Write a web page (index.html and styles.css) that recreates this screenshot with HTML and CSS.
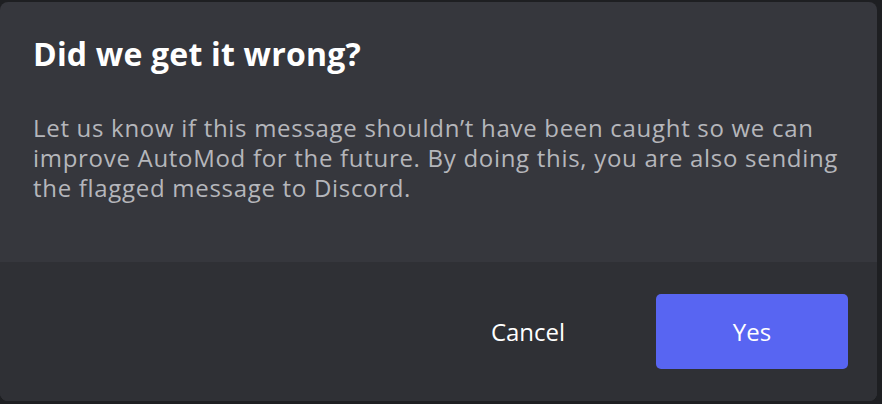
FILE: index.html
```html
<!DOCTYPE html>
<html>
<head>
<meta charset="utf-8">
<link rel="stylesheet" href="styles.css">
</head>
<body>
<div class="modal">
  <div class="content">
    <h1 class="title">Did we get it wrong?</h1>
    <p class="text">Let us know if this message shouldn’t have been caught so we can improve AutoMod for the future. By doing this, you are also sending the flagged message to Discord.</p>
  </div>
  <div class="footer">
    <button class="btn btn-link">Cancel</button>
    <button class="btn btn-primary">Yes</button>
  </div>
</div>
</body>
</html>
```
FILE: styles.css
```css
html, body {
  margin: 0;
  padding: 0;
  background: #1e1f22;
  width: 882px;
  height: 404px;
  overflow: hidden;
}
.modal {
  margin: 2px 5px 3px 0;
  width: 877px;
  height: 399px;
  background: #36373d;
  border-radius: 8px;
  display: flex;
  flex-direction: column;
  overflow: hidden;
}
.content {
  flex: 1;
  padding: 32px 33px 0 33px;
}
.title {
  margin: 0;
  font-family: "Open Sans", sans-serif;
  font-weight: 700;
  font-size: 32px;
  line-height: 40px;
  letter-spacing: 0.2px;
  color: #ffffff;
}
.text {
  margin: 39px 0 0 0;
  font-family: "Open Sans", sans-serif;
  font-size: 24px;
  line-height: 30px;
  letter-spacing: 0.7px;
  color: #b5b6bb;
}
.footer {
  height: 139px;
  background: #2f3035;
  display: flex;
  align-items: center;
  justify-content: flex-end;
  padding: 0 29px 0 0;
}
.btn {
  border: none;
  font-family: "Open Sans", sans-serif;
  font-size: 24px;
  font-weight: 500;
  color: #ffffff;
  cursor: pointer;
  width: 192px;
  height: 75px;
  padding: 0;
}
.btn-link {
  background: transparent;
  margin-right: 32px;
}
.btn-primary {
  background: #5865f2;
  border-radius: 5px;
}
```
